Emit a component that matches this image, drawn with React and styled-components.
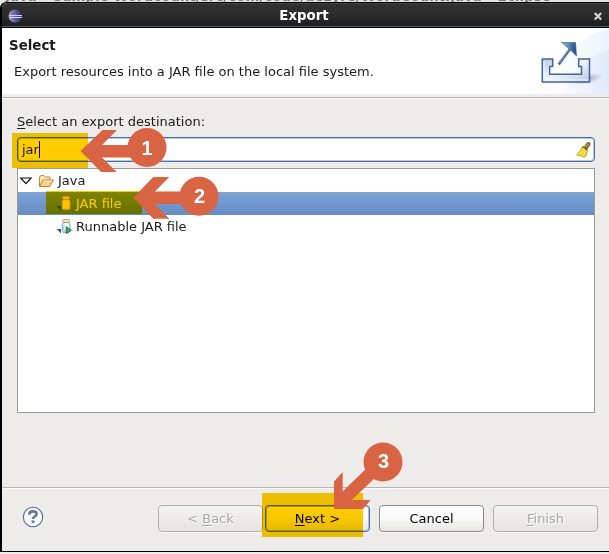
import React from "react";
import styled, { createGlobalStyle } from "styled-components";

const GlobalStyle = createGlobalStyle`
  * {
    box-sizing: border-box;
  }
  body {
    margin: 0;
    overflow: hidden;
    background: #edeceb;
    font-family: "DejaVu Sans", sans-serif;
    font-size: 13px;
    color: #1a1a1a;
  }
`;

const Screen = styled.div`
  position: relative;
  width: 609px;
  height: 554px;
  overflow: hidden;
  background: #edeceb;
`;

const ParentTitle = styled.div`
  height: 2px;
  overflow: hidden;
  display: flex;
  align-items: flex-end;
  padding-left: 5px;
  background: #e4e4e4;
  color: #777;
  font-weight: bold;
  font-size: 13.33px;
  letter-spacing: 0.05px;
  line-height: 10px;
  white-space: pre;
`;

const Window = styled.div`
  display: flex;
  flex-direction: column;
  height: 550px;
  border: solid #000;
  border-width: 1px 0 1px 2px;
  border-top-left-radius: 6px;
  background: #edeceb;
  overflow: hidden;
`;

const TitleBar = styled.div`
  display: flex;
  align-items: center;
  flex: none;
  height: 25px;
  padding: 0 6px 0 6px;
  background: linear-gradient(#444 0, #303030 2px, #2c2c2c 50%, #1c1c1c 23px, #4b5b75 23px, #4b5b75 24px, #000 24px);
`;

const Title = styled.div`
  flex: 1;
  padding-right: 9px;
  text-align: center;
  color: #fff;
  font-weight: bold;
  font-size: 13.33px;
  line-height: 24px;
`;

const Header = styled.div`
  display: flex;
  justify-content: space-between;
  flex: none;
  height: 69px;
  background: linear-gradient(#fff 66px, #edeceb 66px);
`;

const HeaderText = styled.div`
  padding: 9px 0 0 7px;
`;

const Heading = styled.div`
  font-weight: bold;
  font-size: 13.4px;
  line-height: 18px;
`;

const Description = styled.div`
  padding: 8px 0 0 5px;
  line-height: 18px;
  white-space: nowrap;
`;

const Separator = styled.div`
  flex: none;
  height: 2px;
  border-top: 1px solid #b5b3b1;
  background: #fbfbfb;
`;

const Body = styled.div`
  flex: 1;
  padding: 15px 14px 0 15px;
`;

const Label = styled.div`
  height: 23px;
  line-height: 16px;
`;

const Field = styled.div`
  display: flex;
  align-items: center;
  height: 25px;
  padding: 0 2px 0 4px;
  border: 1px solid #4a6fa5;
  border-radius: 4px;
  box-shadow: inset 0 0 0 1px #b4c9e4;
  background: #fff;
`;

const Caret = styled.span`
  width: 1px;
  height: 17px;
  background: #000;
`;

const Spacer = styled.div`
  flex: 1;
`;

const Tree = styled.div`
  height: 245px;
  margin-top: 6px;
  border: 1px solid #9c9a97;
  background: #fff;
`;

const Row = styled.div`
  display: flex;
  align-items: center;
  height: 23px;
  padding-left: ${(p) => (p.$child ? 38 : 1)}px;
  color: ${(p) => (p.$selected ? "#fff" : "#1a1a1a")};
  background: ${(p) => (p.$selected ? "linear-gradient(#7fa4d6, #648cc4)" : "none")};
  > span {
    margin-left: ${(p) => (p.$child ? 4 : 3)}px;
  }
`;

const Footer = styled.div`
  display: flex;
  align-items: flex-start;
  flex: none;
  height: 62px;
  padding: 16px 11px 0 20px;
  > svg {
    margin-top: 1px;
  }
`;

const Buttons = styled.div`
  display: flex;
  gap: 9px;
  margin-left: auto;
`;

const ButtonPair = styled.div`
  display: flex;
  gap: 2px;
`;

const Button = styled.button`
  width: 105px;
  height: 27px;
  padding: 0;
  border: 1px solid ${(p) => (p.disabled ? "#b1afac" : p.$focused ? "#50709b" : "#8b8987")};
  border-radius: 4px;
  box-shadow: ${(p) => (p.$focused ? "inset 0 0 0 1px #a3bfe2" : "0 1px 0 #f8f8f8")};
  background: ${(p) => (p.disabled ? "linear-gradient(#f3f3f2, #e5e4e2)" : "linear-gradient(#fff, #fbfbfb 45%, #e6e5e3)")};
  color: ${(p) => (p.disabled ? "#aaa8a5" : "#000")};
  text-shadow: ${(p) => (p.disabled ? "1px 1px 0 #fff" : "none")};
  font-family: inherit;
  font-size: 13px;
  line-height: 25px;
`;

const Mnemonic = styled.span`
  text-decoration: underline;
  text-underline-offset: 2px;
  text-decoration-thickness: 1px;
`;

const Marker = styled.div`
  position: absolute;
  left: ${(p) => p.$x}px;
  top: ${(p) => p.$y}px;
  width: ${(p) => p.$w}px;
  height: ${(p) => p.$h}px;
  background: #ffcc00;
  mix-blend-mode: multiply;
`;

const Callouts = styled.svg`
  position: absolute;
  left: 0;
  top: 0;
  fill: #d96444;
  text {
    fill: #fff;
    font: bold 20px "Liberation Sans", sans-serif;
    text-anchor: middle;
  }
`;

const EclipseIcon = () => (
  <svg width="16" height="16" viewBox="0 0 16 16">
    <defs>
      <linearGradient id="moon">
        <stop offset="0" stopColor="#bca3c5" />
        <stop offset="0.3" stopColor="#7277b5" />
        <stop offset="1" stopColor="#252b76" />
      </linearGradient>
    </defs>
    <circle cx="7.2" cy="8" r="6.6" fill="url(#moon)" />
    <path d="M1 7.5h13M1 9.5h13" stroke="#d4d8f4" />
  </svg>
);

const CloseIcon = () => (
  <svg width="10" height="10" viewBox="0 0 10 10">
    <path d="M1.7 1.9L8.2 8.4M8.2 1.9L1.7 8.4" stroke="#d5d5d5" strokeWidth="2.1" />
  </svg>
);

const ExportBanner = () => (
  <svg width="89" height="66" viewBox="0 0 89 66">
    <defs>
      <linearGradient id="sky">
        <stop offset="0" stopColor="#fff" />
        <stop offset="0.5" stopColor="#fbfcff" />
        <stop offset="1" stopColor="#edf2fd" />
      </linearGradient>
      <linearGradient id="hill">
        <stop offset="0" stopColor="#f9fbff" />
        <stop offset="1" stopColor="#e0e9fa" />
      </linearGradient>
      <linearGradient id="tray" x2="1" y2="1">
        <stop offset="0" stopColor="#b9cce4" />
        <stop offset="0.5" stopColor="#edf3fc" />
        <stop offset="1" stopColor="#b5c7e1" />
      </linearGradient>
      <linearGradient id="head">
        <stop offset="0" stopColor="#9dc3db" />
        <stop offset="1" stopColor="#1f4880" />
      </linearGradient>
      <radialGradient id="shade">
        <stop offset="0" stopColor="#a6a6bd" />
        <stop offset="1" stopColor="#a6a6bd" stopOpacity="0" />
      </radialGradient>
    </defs>
    <path d="M0 66Q28 62 45 33Q62 6 89 1V66Z" fill="url(#sky)" />
    <path d="M42 66Q55 31 89 22V66Z" fill="url(#hill)" />
    <ellipse cx="67" cy="51" rx="16" ry="5" fill="url(#shade)" transform="rotate(-12 67 51)" />
    <path
      d="M22.3 31H32.7V38.5H29.7V46.2H61.5V38.5H58.7V31H69.5V54H22.3Z"
      fill="url(#tray)"
      stroke="#426396"
      strokeWidth="1.5"
    />
    <path d="M24 33v19h44" fill="none" stroke="#f6faff" />
    <path d="M38.7 36.5L50 21" stroke="#496993" strokeWidth="2.7" />
    <path d="M39.5 35L49 21" stroke="#92b3d0" strokeWidth="0.8" />
    <path d="M41.5 14.5H55.5L56.5 28L52 23.5L47 19Z" fill="url(#head)" stroke="#345b8a" strokeWidth="0.6" />
  </svg>
);

const BroomIcon = () => (
  <svg width="18" height="18" viewBox="0 0 18 18">
    <path d="M12.3 6L14.5 3" stroke="#764d22" strokeWidth="4" strokeLinecap="round" />
    <path d="M12.3 5.5L14.4 3" stroke="#d49a52" strokeWidth="1.7" strokeLinecap="round" strokeDasharray="2 1" />
    <path d="M8.5 5.5L13.5 9.5L12 15L9.5 16.3L6.5 14.8L2.5 14Q6 11 8.5 5.5Z" fill="#ead52a" stroke="#aa9318" strokeWidth="0.7" />
    <path d="M8.5 5.5L13.5 9" stroke="#8a5b26" strokeWidth="1.5" />
    <path d="M9.5 8L6 13.5M11.2 10L9.5 15" stroke="#fff17a" />
  </svg>
);

const Expander = () => (
  <svg width="14" height="12" viewBox="0 0 14 12">
    <path d="M1.8 3H12L7 8.6Z" fill="#fff" stroke="#111" strokeWidth="1.2" />
  </svg>
);

const FolderSvg = styled.svg`
  margin-left: 5px;
`;

const FolderIcon = () => (
  <FolderSvg width="17" height="14" viewBox="0 0 17 14">
    <path d="M1.5 12V3L3 1.5H6L7.5 3H12V6" fill="#fbe6ae" stroke="#bc8541" />
    <path d="M1.5 12.5L5 6H15.5L11.5 12.5Z" fill="#fbd283" stroke="#bb8136" />
    <path d="M5.5 7H14" stroke="#fff1c8" />
  </FolderSvg>
);

const JarIcon = ({ runnable }) => (
  <svg width="16" height="18" viewBox="0 0 16 18">
    <path d="M0.5 11H5V15.5Z" fill="#2e618e" />
    <path
      d="M7.5 4.5L6.3 6.5V13.3Q6.3 14.3 7.3 14.3H12.9Q13.9 14.3 13.9 13.3V6.5L12.7 4.5Z"
      fill={runnable ? "#edf4fb" : "#fff4cf"}
      stroke={runnable ? "#7b9dbb" : "#dbc989"}
    />
    <rect x="6.6" y="1.6" width="7" height="2.6" rx="0.8" fill="#fff3c8" stroke={runnable ? "#aa925d" : "#c7a45c"} strokeWidth="0.9" />
    {runnable && <path d="M7.5 7.5V13H11" stroke="#b7d2e8" strokeWidth="1.6" fill="none" />}
    {runnable && <path d="M10.2 8.7V15.7L15.3 12.2Z" fill="#43a35a" stroke="#247442" strokeWidth="0.9" />}
  </svg>
);

const HelpIcon = () => (
  <svg width="22" height="22" viewBox="0 0 22 22">
    <circle cx="11" cy="11" r="9.7" fill="#f7f8fa" stroke="#57688b" strokeWidth="1.1" />
    <path d="M7.2 8.6Q7.4 5.4 11 5.4Q14.6 5.4 14.6 8Q14.6 9.6 12.6 10.6Q11 11.4 11 13" fill="none" stroke="#65779c" strokeWidth="2.6" />
    <rect x="9.6" y="14.4" width="2.8" height="2.6" fill="#65779c" />
  </svg>
);

const App = () => (
  <Screen>
    <GlobalStyle />
    <ParentTitle>Java – Sample Wordcount/src/com/code/dezyre/WordCount.java – Eclipse</ParentTitle>
    <Window>
      <TitleBar>
        <EclipseIcon />
        <Title>Export</Title>
        <CloseIcon />
      </TitleBar>
      <Header>
        <HeaderText>
          <Heading>Select</Heading>
          <Description>Export resources into a JAR file on the local file system.</Description>
        </HeaderText>
        <ExportBanner />
      </Header>
      <Separator />
      <Body>
        <Label>
          <Mnemonic>S</Mnemonic>elect an export destination:
        </Label>
        <Field>
          <span>jar</span>
          <Caret />
          <Spacer />
          <BroomIcon />
        </Field>
        <Tree>
          <Row>
            <Expander />
            <FolderIcon />
            <span>Java</span>
          </Row>
          <Row $child $selected>
            <JarIcon />
            <span>JAR file</span>
          </Row>
          <Row $child>
            <JarIcon runnable />
            <span>Runnable JAR file</span>
          </Row>
        </Tree>
      </Body>
      <Separator />
      <Footer>
        <HelpIcon />
        <Buttons>
          <ButtonPair>
            <Button disabled>
              &lt; <Mnemonic>B</Mnemonic>ack
            </Button>
            <Button $focused>
              <Mnemonic>N</Mnemonic>ext &gt;
            </Button>
          </ButtonPair>
          <Button>Cancel</Button>
          <Button disabled>
            <Mnemonic>F</Mnemonic>inish
          </Button>
        </Buttons>
      </Footer>
    </Window>
    <Marker $x={12} $y={133} $w={76} $h={35} />
    <Marker $x={46} $y={191} $w={96} $h={23} />
    <Marker $x={262} $y={493} $w={101} $h={44} />
    <Callouts width="609" height="554">
      <path d="M80.5 151L102.5 130H117L102 145H135V157.5H102L116.5 172H101Z" />
      <circle cx="147" cy="147.5" r="19.5" />
      <text x="147" y="154.5">1</text>
      <path d="M133.3 197.7L153.3 177H169.3L155 191.5H185V204H154.5L169.3 218.7H153.3Z" />
      <circle cx="199" cy="196.3" r="19.5" />
      <text x="199.5" y="202.5">2</text>
      <path d="M334 509V481.5L342.7 472V491.3L366 469L375 478L351.7 500H370.7L363 509Z" />
      <circle cx="383" cy="462" r="19.5" />
      <text x="383.5" y="468">3</text>
    </Callouts>
  </Screen>
);

export default App;
